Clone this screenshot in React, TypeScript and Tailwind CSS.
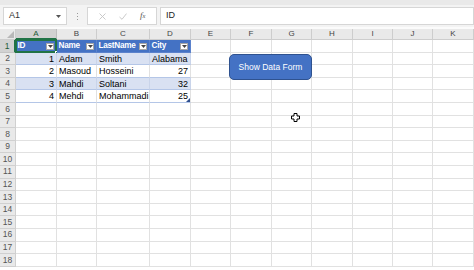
import React from "react";

const COLS = ["A", "B", "C", "D", "E", "F", "G", "H", "I", "J", "K"];
const GRID = "grid grid-cols-[16px_41px_40px_53px_41px_40px_41px_40px_41px_40px_40px_41px]";

type Cell = { v: string; right?: boolean };
const data: Cell[][] = [
  [{ v: "ID" }, { v: "Name" }, { v: "LastName" }, { v: "City" }],
  [{ v: "1", right: true }, { v: "Adam" }, { v: "Smith" }, { v: "Alabama" }],
  [{ v: "2", right: true }, { v: "Masoud" }, { v: "Hosseini" }, { v: "27", right: true }],
  [{ v: "3", right: true }, { v: "Mahdi" }, { v: "Soltani" }, { v: "32", right: true }],
  [{ v: "4", right: true }, { v: "Mehdi" }, { v: "Mohammadi" }, { v: "25", right: true }],
];

function DropBtn() {
  return (
    <span className="absolute right-[2px] top-[2.5px] w-[8px] h-[7.5px] bg-white border border-[#a6a6a6] flex items-center justify-center">
      <svg width="5" height="3" viewBox="0 0 5 3">
        <path d="M0 0 L5 0 L2.5 3 Z" fill="#444" />
      </svg>
    </span>
  );
}

function BodyCell({ r, c }: { r: number; c: number }) {
  const inTable = r <= 5 && c <= 3;
  const cell = inTable ? data[r - 1][c] : undefined;
  if (inTable && r === 1) {
    const selected = c === 0;
    return (
      <div className="relative bg-[#4472c4] border-r border-b border-[#5b82cc] text-white font-bold text-[8.2px] tracking-[-0.25px] leading-[12px] pl-[1.5px] whitespace-nowrap">
        {cell?.v}
        <DropBtn />
        {selected && (
          <>
            <div className="absolute -left-[1px] -top-[1px] -right-[1px] -bottom-[1px] border-2 border-[#217346]" />
            <div className="absolute -right-[3px] -bottom-[3px] w-[4px] h-[4px] bg-[#217346] border border-white" />
          </>
        )}
      </div>
    );
  }
  if (inTable) {
    const band = r % 2 === 0;
    return (
      <div
        className={`relative border-r border-b text-[9px] leading-[12.5px] px-[2px] whitespace-nowrap overflow-visible text-black ${
          band ? "bg-[#d9e1f2] border-r-[#c9d4ea] border-b-[#b4c6e7]" : "bg-white border-r-[#e1e1e1] border-b-[#b4c6e7]"
        } ${cell?.right ? "text-right" : "text-left"}`}
      >
        {cell?.v}
        {r === 5 && c === 3 && (
          <svg className="absolute right-[0px] bottom-[0px]" width="4" height="4" viewBox="0 0 4 4">
            <path d="M4 0 L4 4 L0 4 Z" fill="#2f4f8f" />
          </svg>
        )}
      </div>
    );
  }
  return <div className="border-r border-b border-[#e1e1e1] bg-white" />;
}

export default function App() {
  const rows = Array.from({ length: 18 }, (_, i) => i + 1);
  return (
    <div className="w-[474px] h-[270px] overflow-hidden bg-white font-['Liberation_Sans',Arial,sans-serif] relative select-none">
      {/* Formula bar */}
      <div className="h-[27px] bg-[#f3f3f3] border-t-[5px] border-[#e9e9e9] flex items-start pt-[2px] pl-[3px] gap-0">
        <div className="w-[64px] h-[18px] bg-white border border-[#d6d6d6] flex items-center justify-between px-[5px]">
          <span className="text-[9px] text-[#333]">A1</span>
          <svg width="5" height="3" viewBox="0 0 5 3">
            <path d="M0 0 L5 0 L2.5 3 Z" fill="#555" />
          </svg>
        </div>
        <div className="w-[20px] h-[18px] flex flex-col items-center justify-center gap-[2px]">
          <span className="w-[1px] h-[1px] bg-[#9a9a9a]" />
          <span className="w-[1px] h-[1px] bg-[#9a9a9a]" />
          <span className="w-[1px] h-[1px] bg-[#9a9a9a]" />
        </div>
        <div className="w-[70px] h-[18px] bg-white border border-[#d6d6d6] flex items-center justify-around px-[4px]">
          <svg width="7" height="7" viewBox="0 0 7 7">
            <path d="M0.5 0.5 L6.5 6.5 M6.5 0.5 L0.5 6.5" stroke="#c4c4c4" strokeWidth="0.9" />
          </svg>
          <svg width="8" height="7" viewBox="0 0 8 7">
            <path d="M0.5 4 L3 6.3 L7.5 0.6" stroke="#c4c4c4" strokeWidth="0.9" fill="none" />
          </svg>
          <span className="text-[9px] italic text-[#555] font-['Liberation_Serif',serif]">
            f<span className="text-[6.5px]">x</span>
          </span>
        </div>
        <div className="flex-1 h-[18px] bg-white border border-[#d6d6d6] ml-[3px] flex items-center pl-[5px]">
          <span className="text-[9px] text-[#222]">ID</span>
        </div>
      </div>
      <div className="h-[2px] bg-[#fbfbfb]" />

      {/* Column headers */}
      <div className={`${GRID} h-[11px]`}>
        <div className="relative bg-[#e9e9e9] border-r border-b border-[#cdcdcd]">
          <svg className="absolute right-[1px] bottom-[1px]" width="7" height="7" viewBox="0 0 7 7">
            <path d="M7 0 L7 7 L0 7 Z" fill="#b8b8b8" />
          </svg>
        </div>
        {COLS.map((c, i) => (
          <div
            key={c}
            className={`flex items-center justify-center text-[8px] leading-none border-r border-b ${
              i === 0
                ? "bg-[#d2d2d2] text-[#1e5b36] border-r-[#bdbdbd] border-b-2 border-b-[#217346]"
                : "bg-[#e9e9e9] text-[#444] border-[#cdcdcd]"
            }`}
          >
            {c}
          </div>
        ))}
      </div>

      {/* Body */}
      <div className={`${GRID} auto-rows-[12.6px]`}>
        {rows.map((r) => (
          <React.Fragment key={r}>
            <div
              className={`flex items-center justify-center text-[8.5px] leading-none border-r border-b ${
                r === 1 ? "bg-[#d2d2d2] text-[#1e5b36] border-r-2 border-r-[#217346] border-b-[#c4c4c4]" : "bg-[#e9e9e9] text-[#555] border-[#d0d0d0]"
              }`}
            >
              {r}
            </div>
            {COLS.map((_, c) => (
              <BodyCell key={c} r={r} c={c} />
            ))}
          </React.Fragment>
        ))}
      </div>

      {/* Button shape */}
      <div className="absolute left-[229px] top-[54px] w-[83px] h-[26px] rounded-[5px] bg-[#4472c4] border border-[#2f528f] flex items-center justify-center">
        <span className="text-[8.5px] text-white">Show Data Form</span>
      </div>

      {/* Cursor */}
      <svg className="absolute left-[291px] top-[113px]" width="9" height="9" viewBox="0 0 9 9">
        <path d="M3 0.5 H6 V3 H8.5 V6 H6 V8.5 H3 V6 H0.5 V3 H3 Z" fill="white" stroke="black" strokeWidth="1" />
      </svg>
    </div>
  );
}
